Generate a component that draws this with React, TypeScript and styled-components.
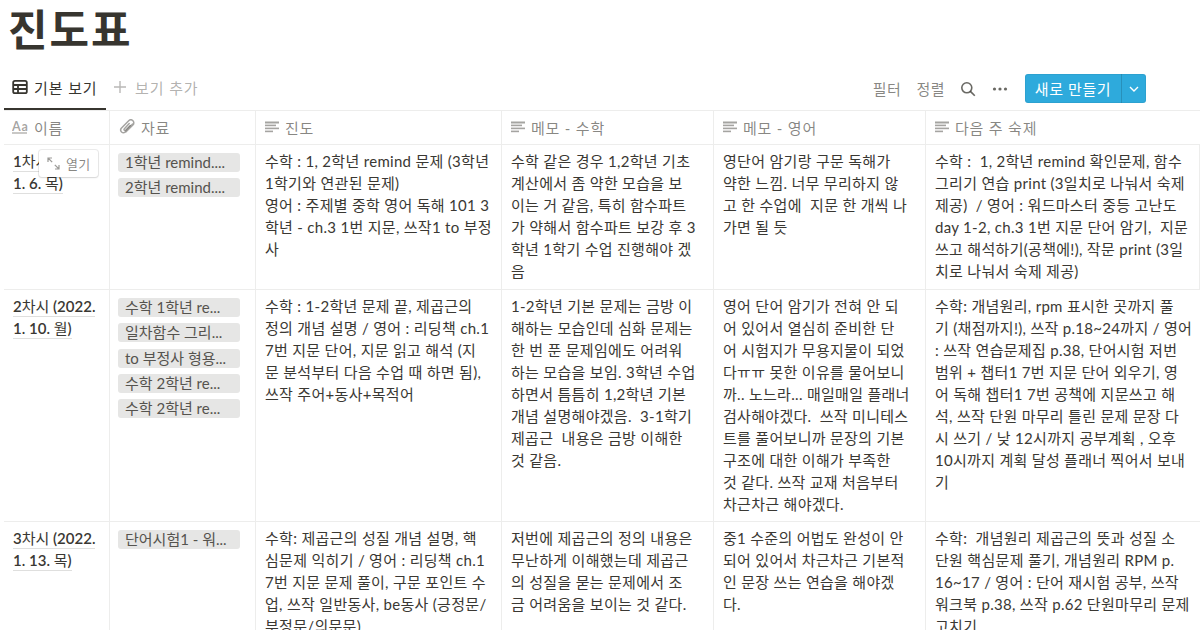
import React from "react";
import styled, { createGlobalStyle } from "styled-components";

const GlobalStyle = createGlobalStyle`
  html, body {
    margin: 0;
    padding: 0;
    width: 1200px;
    height: 630px;
    overflow: hidden;
    background: #fff;
    font-family: Lato, "Noto Sans CJK KR", sans-serif;
    color: #37352f;
  }
  * { box-sizing: border-box; }
`;

const Page = styled.div`
  width: 1200px;
  height: 630px;
  overflow: hidden;
  padding-left: 4px;
`;

const Title = styled.h1`
  margin: 0;
  height: 64px;
  padding: 4px 0 0 4px;
  font-size: 43px;
  line-height: 52px;
  font-weight: 700;
  letter-spacing: 2px;
  color: #37352f;
`;

const Toolbar = styled.div`
  display: flex;
  align-items: center;
  justify-content: space-between;
  height: 46px;
  padding-right: 54px;
`;

const Tabs = styled.div`
  display: flex;
  align-items: stretch;
  height: 46px;
`;

const Tab = styled.div<{ $active?: boolean }>`
  display: flex;
  align-items: center;
  gap: ${({ $active }) => ($active ? "6px" : "8px")};
  width: ${({ $active }) => ($active ? "102px" : "auto")};
  padding: 2px 0 0 ${({ $active }) => ($active ? "8px" : "7px")};
  font-size: 15px;
  letter-spacing: 0.9px;
  color: ${({ $active }) => ($active ? "#37352f" : "rgba(55,53,47,0.4)")};
  border-bottom: 2px solid ${({ $active }) => ($active ? "#37352f" : "transparent")};
`;

const Actions = styled.div`
  display: flex;
  align-items: center;
  padding-top: 3px;
`;

const ActionText = styled.span`
  font-size: 15px;
  letter-spacing: 0.5px;
  color: rgba(55, 53, 47, 0.6);
  margin-right: 15px;
`;

const ActionIcon = styled.span`
  display: flex;
  margin-right: 16px;
  color: rgba(55, 53, 47, 0.75);
`;

const NewButton = styled.div`
  display: flex;
  align-items: stretch;
  height: 29px;
  margin-left: 1px;
  border-radius: 3px;
  background: #2eaadc;
  color: #fff;
  font-size: 15px;
  box-shadow: inset 0 0 0 1px rgba(15, 15, 15, 0.06);
`;

const NewLabel = styled.span`
  display: flex;
  align-items: center;
  justify-content: center;
  width: 97px;
  letter-spacing: 0.6px;
  border-right: 1px solid rgba(15, 15, 15, 0.16);
`;

const NewCaret = styled.span`
  display: flex;
  align-items: center;
  justify-content: center;
  width: 24px;
`;

const columns = "106px 146px 246px 212px 212px 1fr";

const HeaderRow = styled.div`
  display: grid;
  grid-template-columns: ${columns};
  height: 35px;
  border-top: 1px solid #ededec;
  border-bottom: 1px solid #ededec;
`;

const HeaderCell = styled.div<{ $first?: boolean }>`
  display: flex;
  align-items: center;
  gap: 6px;
  padding-left: ${({ $first }) => ($first ? "8px" : "9px")};
  padding-bottom: 1px;
  font-size: 15px;
  letter-spacing: 0.8px;
  color: rgba(55, 53, 47, 0.6);
  border-right: 1px solid #ededec;
  white-space: nowrap;
  &:last-child { border-right: none; }
`;

const Row = styled.div<{ $height: number }>`
  position: relative;
  display: grid;
  grid-template-columns: ${columns};
  height: ${({ $height }) => $height}px;
  border-bottom: 1px solid #ededec;
`;

const Cell = styled.div`
  padding: 5px 0 0 9px;
  font-size: 15px;
  line-height: 22px;
  letter-spacing: 0.3px;
  color: #3a3833;
  border-right: 1px solid #ededec;
  overflow: hidden;
  &:last-child { border-right: none; }
`;

const Line = styled.div`
  white-space: pre;
`;

const NameLine = styled.div`
  white-space: pre;
  height: 22px;
  letter-spacing: 0;
`;

const NameText = styled.span`
  border-bottom: 1px solid rgba(55, 53, 47, 0.16);
  padding-bottom: 1px;
`;

const NameLatin = styled.span`
  font-weight: 600;
`;

const ChipCell = styled.div`
  display: flex;
  flex-direction: column;
  gap: 6.3px;
  padding: 8px 0 0 8px;
  border-right: 1px solid #ededec;
`;

const Chip = styled.div`
  width: 122px;
  height: 19px;
  padding: 0 7px;
  border-radius: 3px;
  background: #e6e6e5;
  font-size: 15px;
  line-height: 18px;
  color: #55534e;
  white-space: pre;
  overflow: hidden;
`;

const OpenTip = styled.div`
  position: absolute;
  left: 35px;
  top: 5px;
  display: flex;
  align-items: center;
  gap: 5px;
  width: 59px;
  height: 27px;
  padding-left: 7px;
  background: #fff;
  border-radius: 3px;
  font-size: 13px;
  letter-spacing: 0.3px;
  color: rgba(55, 53, 47, 0.6);
  box-shadow: 0 0 0 1px rgba(15, 15, 15, 0.08), 0 1px 2px rgba(15, 15, 15, 0.1);
`;

const TableIcon = () => (
  <svg width="16" height="16" viewBox="0 0 16 16" fill="none" stroke="#37352f" strokeWidth="1.8">
    <rect x="1.2" y="1.8" width="13.6" height="12.4" rx="1.8" />
    <path d="M1.2 6h13.6M1.2 10h13.6M6 6v8" />
  </svg>
);

const PlusIcon = () => (
  <svg width="14" height="14" viewBox="0 0 14 14" stroke="rgba(55,53,47,0.35)" strokeWidth="1.4">
    <path d="M7 1v12M1 7h12" />
  </svg>
);

const SearchIcon = () => (
  <svg width="16" height="16" viewBox="0 0 16 16" fill="none" stroke="currentColor" strokeWidth="1.6">
    <circle cx="6.8" cy="6.8" r="5" />
    <path d="M10.4 10.4l4.4 4.4" />
  </svg>
);

const DotsIcon = () => (
  <svg width="16" height="16" viewBox="0 0 16 16" fill="currentColor">
    <circle cx="2.5" cy="8" r="1.6" />
    <circle cx="8" cy="8" r="1.6" />
    <circle cx="13.5" cy="8" r="1.6" />
  </svg>
);

const CaretIcon = () => (
  <svg width="10" height="6" viewBox="0 0 10 6" fill="none" stroke="#fff" strokeWidth="1.4">
    <path d="M1 1l4 4 4-4" />
  </svg>
);

const AaIcon = () => (
  <svg width="16" height="16" viewBox="0 0 16 16" fill="rgba(55,53,47,0.45)">
    <text x="0" y="11.5" fontSize="12.5" fontWeight="700" fontFamily="Lato, sans-serif">Aa</text>
    <rect x="0" y="13.4" width="15" height="1.2" />
  </svg>
);

const ClipIcon = () => (
  <svg width="16" height="16" viewBox="0 0 16 16" fill="none" stroke="rgba(55,53,47,0.45)" strokeWidth="1.5" strokeLinecap="round">
    <path d="M13.6 5l-7.4 8a2.7 2.7 0 0 1-3.9-3.7l7.4-7.6a3 3 0 0 1 4.2 4.3L6.8 13" />
    <path d="M10.2 4.6l-5 5.3a1 1 0 0 0 1.4 1.4l4.6-4.8" />
  </svg>
);

const TextIcon = () => (
  <svg width="14" height="12" viewBox="0 0 14 12" fill="rgba(55,53,47,0.45)">
    <rect x="0" y="0.5" width="14" height="2" />
    <rect x="0" y="3.6" width="11" height="1.6" />
    <rect x="0" y="6.6" width="14" height="1.6" />
    <rect x="0" y="9.6" width="8" height="1.6" />
  </svg>
);

const ExpandIcon = () => (
  <svg width="15" height="15" viewBox="0 0 15 15" fill="none" stroke="rgba(55,53,47,0.5)" strokeWidth="1.2">
    <path d="M2 6V2h4M2 2l4.2 4.2M13 9v4H9M13 13L8.8 8.8" />
  </svg>
);

type RowData = {
  height: number;
  name: string[];
  chips: string[];
  cells: string[][];
  tip?: boolean;
};

const rows: RowData[] = [
  {
    height: 145,
    tip: true,
    name: ["1차시 (2022.", "1. 6. 목)"],
    chips: ["1학년 remind....", "2학년 remind...."],
    cells: [
      [
        "수학 : 1, 2학년 remind 문제 (3학년",
        "1학기와 연관된 문제)",
        "영어 : 주제별 중학 영어 독해 101 3",
        "학년 - ch.3 1번 지문, 쓰작1 to 부정",
        "사",
      ],
      [
        "수학 같은 경우 1,2학년 기초",
        "계산에서 좀 약한 모습을 보",
        "이는 거 같음, 특히 함수파트",
        "가 약해서 함수파트 보강 후 3",
        "학년 1학기 수업 진행해야 겠",
        "음",
      ],
      [
        "영단어 암기랑 구문 독해가",
        "약한 느낌. 너무 무리하지 않",
        "고 한 수업에  지문 한 개씩 나",
        "가면 될 듯",
      ],
      [
        "수학 :  1, 2학년 remind 확인문제, 함수",
        "그리기 연습 print (3일치로 나눠서 숙제",
        "제공)  / 영어 : 워드마스터 중등 고난도",
        "day 1-2, ch.3 1번 지문 단어 암기,  지문",
        "쓰고 해석하기(공책에!), 작문 print (3일",
        "치로 나눠서 숙제 제공)",
      ],
    ],
  },
  {
    height: 232,
    name: ["2차시 (2022.", "1. 10. 월)"],
    chips: ["수학 1학년 re...", "일차함수 그리...", "to 부정사 형용...", "수학 2학년 re...", "수학 2학년 re..."],
    cells: [
      [
        "수학 : 1-2학년 문제 끝, 제곱근의",
        "정의 개념 설명 / 영어 : 리딩책 ch.1",
        "7번 지문 단어, 지문 읽고 해석 (지",
        "문 분석부터 다음 수업 때 하면 됨),",
        "쓰작 주어+동사+목적어",
      ],
      [
        "1-2학년 기본 문제는 금방 이",
        "해하는 모습인데 심화 문제는",
        "한 번 푼 문제임에도 어려워",
        "하는 모습을 보임. 3학년 수업",
        "하면서 틈틈히 1,2학년 기본",
        "개념 설명해야겠음.  3-1학기",
        "제곱근  내용은 금방 이해한",
        "것 같음.",
      ],
      [
        "영어 단어 암기가 전혀 안 되",
        "어 있어서 열심히 준비한 단",
        "어 시험지가 무용지물이 되었",
        "다ㅠㅠ 못한 이유를 물어보니",
        "까.. 노느라... 매일매일 플래너",
        "검사해야겠다.  쓰작 미니테스",
        "트를 풀어보니까 문장의 기본",
        "구조에 대한 이해가 부족한",
        "것 같다. 쓰작 교재 처음부터",
        "차근차근 해야겠다.",
      ],
      [
        "수학: 개념원리, rpm 표시한 곳까지 풀",
        "기 (채점까지!), 쓰작 p.18~24까지 / 영어",
        ": 쓰작 연습문제집 p.38, 단어시험 저번",
        "범위 + 챕터1 7번 지문 단어 외우기, 영",
        "어 독해 챕터1 7번 공책에 지문쓰고 해",
        "석, 쓰작 단원 마무리 틀린 문제 문장 다",
        "시 쓰기 / 낮 12시까지 공부계획 , 오후",
        "10시까지 계획 달성 플래너 찍어서 보내",
        "기",
      ],
    ],
  },
  {
    height: 130,
    name: ["3차시 (2022.", "1. 13. 목)"],
    chips: ["단어시험1 - 워..."],
    cells: [
      [
        "수학: 제곱근의 성질 개념 설명, 핵",
        "심문제 익히기 / 영어 : 리딩책 ch.1",
        "7번 지문 문제 풀이, 구문 포인트 수",
        "업, 쓰작 일반동사, be동사 (긍정문/",
        "부정문/의문문)",
      ],
      [
        "저번에 제곱근의 정의 내용은",
        "무난하게 이해했는데 제곱근",
        "의 성질을 묻는 문제에서 조",
        "금 어려움을 보이는 것 같다.",
      ],
      [
        "중1 수준의 어법도 완성이 안",
        "되어 있어서 차근차근 기본적",
        "인 문장 쓰는 연습을 해야겠",
        "다.",
      ],
      [
        "수학:  개념원리 제곱근의 뜻과 성질 소",
        "단원 핵심문제 풀기, 개념원리 RPM p.",
        "16~17 / 영어 : 단어 재시험 공부, 쓰작",
        "워크북 p.38, 쓰작 p.62 단원마무리 문제",
        "고치기",
      ],
    ],
  },
];

const headers: { icon: React.ReactNode; label: string }[] = [
  { icon: <AaIcon />, label: "이름" },
  { icon: <ClipIcon />, label: "자료" },
  { icon: <TextIcon />, label: "진도" },
  { icon: <TextIcon />, label: "메모 - 수학" },
  { icon: <TextIcon />, label: "메모 - 영어" },
  { icon: <TextIcon />, label: "다음 주 숙제" },
];

// hangul stays regular in the name column, digits and latin are heavier
const NameParts = ({ text }: { text: string }) => (
  <NameText>
    {text.split(/([가-힣]+)/).map((part, i) =>
      /[가-힣]/.test(part) ? part : <NameLatin key={i}>{part}</NameLatin>
    )}
  </NameText>
);

export default function App() {
  return (
    <Page>
      <GlobalStyle />
      <Title>진도표</Title>
      <Toolbar>
        <Tabs>
          <Tab $active>
            <TableIcon />
            기본 보기
          </Tab>
          <Tab>
            <PlusIcon />
            보기 추가
          </Tab>
        </Tabs>
        <Actions>
          <ActionText>필터</ActionText>
          <ActionText>정렬</ActionText>
          <ActionIcon>
            <SearchIcon />
          </ActionIcon>
          <ActionIcon>
            <DotsIcon />
          </ActionIcon>
          <NewButton>
            <NewLabel>새로 만들기</NewLabel>
            <NewCaret>
              <CaretIcon />
            </NewCaret>
          </NewButton>
        </Actions>
      </Toolbar>
      <HeaderRow>
        {headers.map((h, i) => (
          <HeaderCell key={h.label} $first={i === 0}>
            {h.icon}
            {h.label}
          </HeaderCell>
        ))}
      </HeaderRow>
      {rows.map((row) => (
        <Row key={row.name[0]} $height={row.height}>
          <Cell>
            {row.name.map((t) => (
              <NameLine key={t}>
                <NameParts text={t} />
              </NameLine>
            ))}
          </Cell>
          <ChipCell>
            {row.chips.map((c, i) => (
              <Chip key={i}>{c}</Chip>
            ))}
          </ChipCell>
          {row.cells.map((lines, i) => (
            <Cell key={i}>
              {lines.map((l, j) => (
                <Line key={j}>{l}</Line>
              ))}
            </Cell>
          ))}
          {row.tip && (
            <OpenTip>
              <ExpandIcon />
              열기
            </OpenTip>
          )}
        </Row>
      ))}
    </Page>
  );
}
